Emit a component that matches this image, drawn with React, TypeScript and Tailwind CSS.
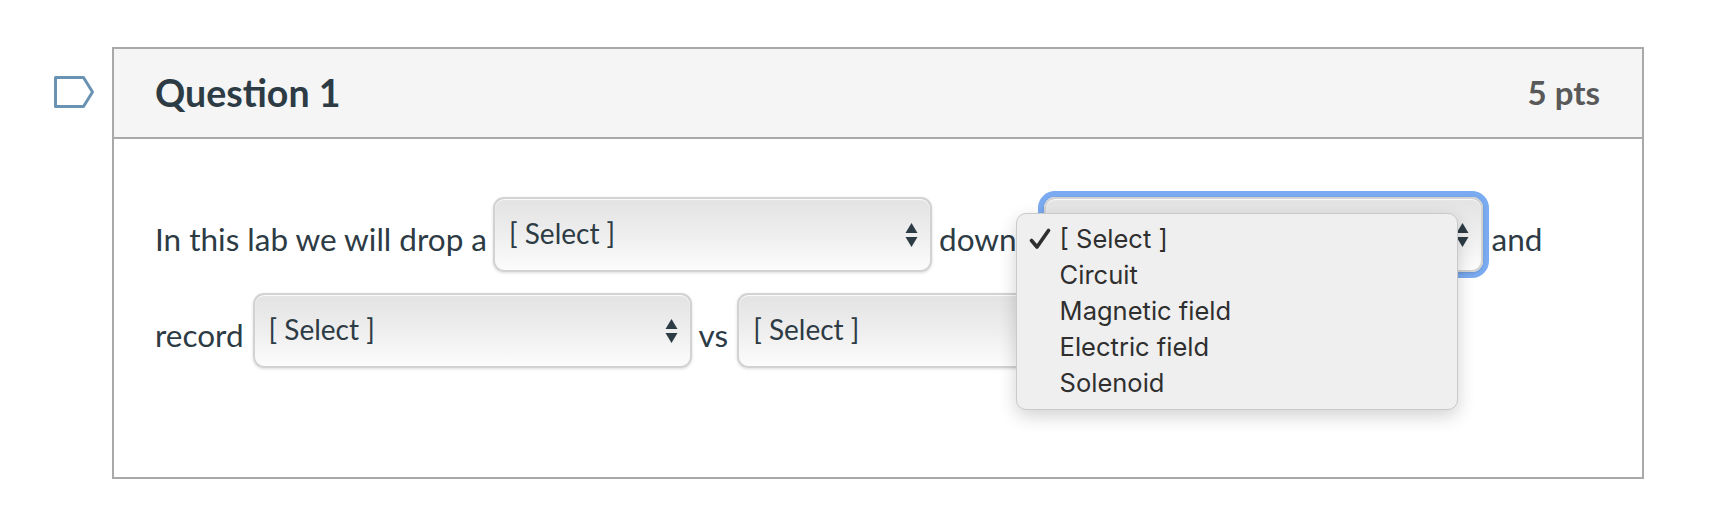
import React from 'react';

type SelectBoxProps = {
  label?: string;
  focused?: boolean;
  className?: string;
  children?: React.ReactNode;
};

const menuOptions = ['[ Select ]', 'Circuit', 'Magnetic field', 'Electric field', 'Solenoid'];

function Arrows() {
  return (
    <svg width="13" height="26" viewBox="0 0 13 26" aria-hidden="true" className="shrink-0">
      <path d="M6.5 1 L12.5 11 L0.5 11 Z" fill="#2d3b45" />
      <path d="M6.5 25 L12.5 15 L0.5 15 Z" fill="#2d3b45" />
    </svg>
  );
}

function CheckMark() {
  return (
    <svg width="22" height="22" viewBox="0 0 22 22" aria-hidden="true">
      <path
        d="M2.5 12.5 L8 19 L19.5 2.5"
        fill="none"
        stroke="#2f2f2f"
        strokeWidth="3.6"
        strokeLinecap="round"
        strokeLinejoin="round"
      />
    </svg>
  );
}

function SelectBox({ label, focused, className, children }: SelectBoxProps) {
  return (
    <div
      className={`relative h-[75px] w-[439px] shrink-0 rounded-[11px] ${
        focused ? 'shadow-[0_0_0_6px_#7aaaf0]' : ''
      } ${className ?? ''}`}
    >
      <div className="flex h-full w-full items-center justify-between rounded-[11px] border-2 border-[#d2d2d2] bg-gradient-to-b from-[#e3e3e3] via-[#eeeeee] to-[#fcfcfc] pl-[14px] pr-[12px] shadow-[inset_0_1px_1px_rgba(255,255,255,0.9),0_1px_3px_rgba(0,0,0,0.14)]">
        <span className="-mt-[3px] text-[28px] text-[#2d3b45]">{label}</span>
        <Arrows />
      </div>
      {children}
    </div>
  );
}

function DropdownMenu() {
  return (
    <div className="absolute left-[-28px] top-[16px] z-10 w-[442px] rounded-[10px] border border-[#c9c9c9] bg-[#efefef] pt-[7px] pb-[8px] shadow-[0_6px_18px_rgba(0,0,0,0.18)] font-['Inter',sans-serif] text-[25.5px] text-[#2f2f2f]">
      {menuOptions.map((opt, i) => (
        <div key={opt} className="flex h-[36px] items-center">
          <span className="flex w-[43px] shrink-0 pl-[12px]">{i === 0 ? <CheckMark /> : null}</span>
          <span>{opt}</span>
        </div>
      ))}
    </div>
  );
}

export default function App() {
  return (
    <div className="flex min-h-[516px] w-[1736px] bg-white pl-[54px] pt-[47px] font-['Lato',sans-serif] text-[#2d3b45]">
      <div className="w-[58px] shrink-0 pt-[29px]">
        <svg width="40" height="32" viewBox="0 0 40 32" aria-hidden="true">
          <path
            d="M1.5 1.5 H29.5 L38.5 16 L29.5 30.5 H1.5 Z"
            fill="none"
            stroke="#6a93b3"
            strokeWidth="3"
            strokeLinejoin="round"
          />
        </svg>
      </div>

      <div className="h-[432px] w-[1532px] shrink-0 border-2 border-[#a9a9a9]">
        <div className="flex h-[90px] items-center justify-between border-b-2 border-[#a9a9a9] bg-[#f5f5f5] pl-[41px] pr-[42px]">
          <h2 className="text-[37.5px] font-bold text-[#2d3b45]">Question 1</h2>
          <span className="text-[33px] font-bold text-[#595959]">5 pts</span>
        </div>

        <div className="pl-[41px] pt-[58px] text-[31.5px]">
          <div className="flex items-center">
            <span className="pt-[10px]">In this lab we will drop a</span>
            <SelectBox label="[ Select ]" className="ml-[6px]" />
            <span className="ml-[7px] pt-[10px]">down</span>
            <SelectBox focused className="ml-[27px]">
              <DropdownMenu />
            </SelectBox>
            <span className="ml-[9px] pt-[10px]">and</span>
          </div>
          <div className="mt-[21px] flex items-center">
            <span className="pt-[10px]">record</span>
            <SelectBox label="[ Select ]" className="ml-[9px]" />
            <span className="ml-[7px] pt-[10px]">vs</span>
            <SelectBox label="[ Select ]" className="ml-[9px]" />
          </div>
        </div>
      </div>
    </div>
  );
}
